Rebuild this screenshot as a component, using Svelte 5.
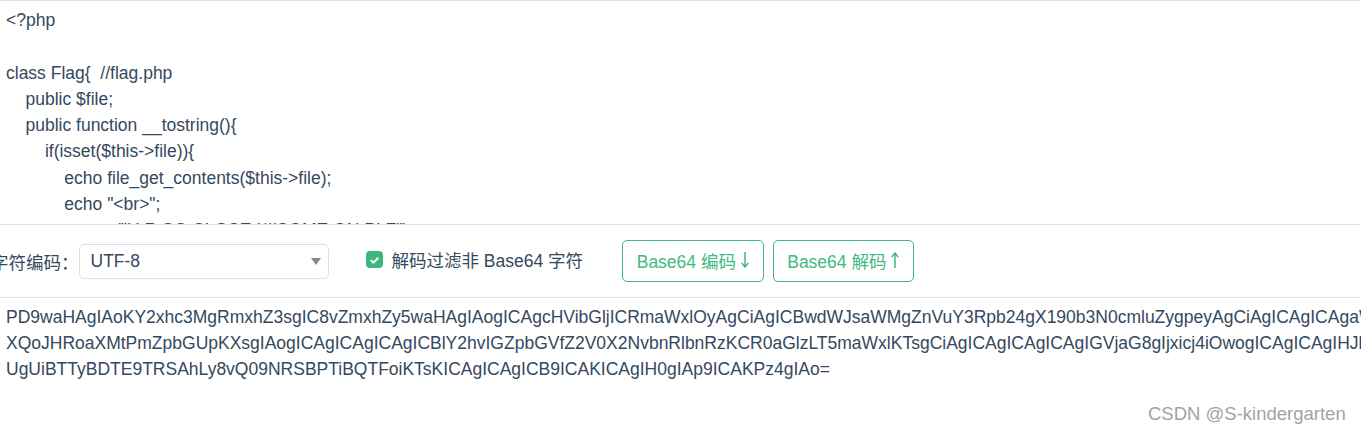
<script>
	const source = `<?php

class Flag{  //flag.php
    public $file;
    public function __tostring(){
        if(isset($this->file)){
            echo file_get_contents($this->file);
            echo "<br>";
            return ("U R SO CLOSE !///COME ON PLZ");
        }
    }
}
?>`;

	const encoded = [
		'PD9waHAgIAoKY2xhc3MgRmxhZ3sgIC8vZmxhZy5waHAgIAogICAgcHVibGljICRmaWxlOyAgCiAgICBwdWJsaWMgZnVuY3Rpb24gX190b3N0cmluZygpeyAgCiAgICAgICAgaW',
		'XQoJHRoaXMtPmZpbGUpKXsgIAogICAgICAgICAgICBlY2hvIGZpbGVfZ2V0X2NvbnRlbnRzKCR0aGlzLT5maWxlKTsgCiAgICAgICAgICAgIGVjaG8gIjxicj4iOwogICAgICAgIHJl',
		'UgUiBTTyBDTE9TRSAhLy8vQ09NRSBPTiBQTFoiKTsKICAgICAgICB9ICAKICAgIH0gIAp9ICAKPz4gIAo='
	];

	let charset = 'UTF-8';
	let filter = true;
</script>

<main class="page">
	<pre class="source">{source}</pre>

	<div class="toolbar">
		<label class="charset">
			<span>字符编码：</span>
			<span class="select">
				<select bind:value={charset}>
					<option>UTF-8</option>
					<option>GBK</option>
				</select>
				<i class="caret"></i>
			</span>
		</label>

		<label class="filter">
			<input type="checkbox" bind:checked={filter} />
			<span class="box">
				<svg viewBox="0 0 18 18" width="18" height="18">
					<path d="M5 9.2l2.8 2.7L13 6.6" fill="none" stroke="#fff" stroke-width="2" />
				</svg>
			</span>
			<span>解码过滤非 Base64 字符</span>
		</label>

		<div class="actions">
			<button type="button">
				Base64 编码
				<svg viewBox="0 0 8 16" width="8" height="16">
					<path d="M4 0v15M.8 11L4 15l3.200-4" fill="none" stroke="currentColor" stroke-width="1.500" />
				</svg>
			</button>
			<button type="button">
				Base64 解码
				<svg viewBox="0 0 8 16" width="8" height="16">
					<path d="M4 16V1M.8 5L4 1l3.200 4" fill="none" stroke="currentColor" stroke-width="1.500" />
				</svg>
			</button>
		</div>
	</div>

	<div class="output">
		{#each encoded as line}
			<div>{line}</div>
		{/each}
	</div>

	<div class="mark">CSDN @S-kindergarten</div>
</main>

<style>
	:global(body) {
		background: #fff;
		overflow: hidden;
	}

	.page {
		position: relative;
		width: 1361px;
		height: 434px;
		overflow: hidden;
		color: #34495e;
		font-family: "Liberation Sans", "Noto Sans CJK SC", sans-serif;
		font-size: 17.5px;
		border-top: 1px solid #e3e3ea;
		box-sizing: border-box;
	}

	.source {
		margin: 0;
		height: 223px;
		padding: 6px 6px 0;
		box-sizing: border-box;
		overflow: hidden;
		font: inherit;
		line-height: 26.25px;
	}

	.toolbar {
		display: flex;
		align-items: center;
		height: 72px;
		margin-left: -9px;
		border-top: 1px solid #e3e3ea;
		border-bottom: 1px solid #e3e3ea;
	}

	.charset {
		display: flex;
		align-items: center;
	}

	.select {
		position: relative;
		display: block;
		width: 250px;
		height: 35px;
	}

	select {
		appearance: none;
		width: 100%;
		height: 100%;
		padding: 0 11px;
		background: #fff;
		border: 1px solid #dcdfe6;
		border-radius: 5px;
		color: inherit;
		font: inherit;
	}

	.caret {
		position: absolute;
		top: 14px;
		right: 8px;
		border-top: 7px solid #888;
		border-left: 5px solid transparent;
		border-right: 5px solid transparent;
	}

	.filter {
		display: flex;
		align-items: center;
		margin-left: 37px;
		margin-bottom: 3px;
	}

	.filter input {
		display: none;
	}

	.box {
		display: flex;
		width: 17px;
		height: 17px;
		margin-right: 9px;
		background: #3eb57e;
		border-radius: 4px;
	}

	.actions {
		display: flex;
		gap: 9px;
		margin-left: 39px;
	}

	button {
		display: flex;
		align-items: center;
		justify-content: center;
		gap: 5px;
		width: 141.500px;
		height: 42px;
		padding: 0 0 2px;
		background: #fff;
		border: 1px solid #42b983;
		border-radius: 5px;
		color: #42b983;
		font: inherit;
		white-space: nowrap;
	}

	.output {
		padding: 6px 6px 0;
		line-height: 26px;
		white-space: nowrap;
		overflow: hidden;
	}

	.mark {
		position: absolute;
		top: 402px;
		left: 1148px;
		color: #a3a3a3;
		font-size: 18.500px;
		white-space: nowrap;
	}
</style>
